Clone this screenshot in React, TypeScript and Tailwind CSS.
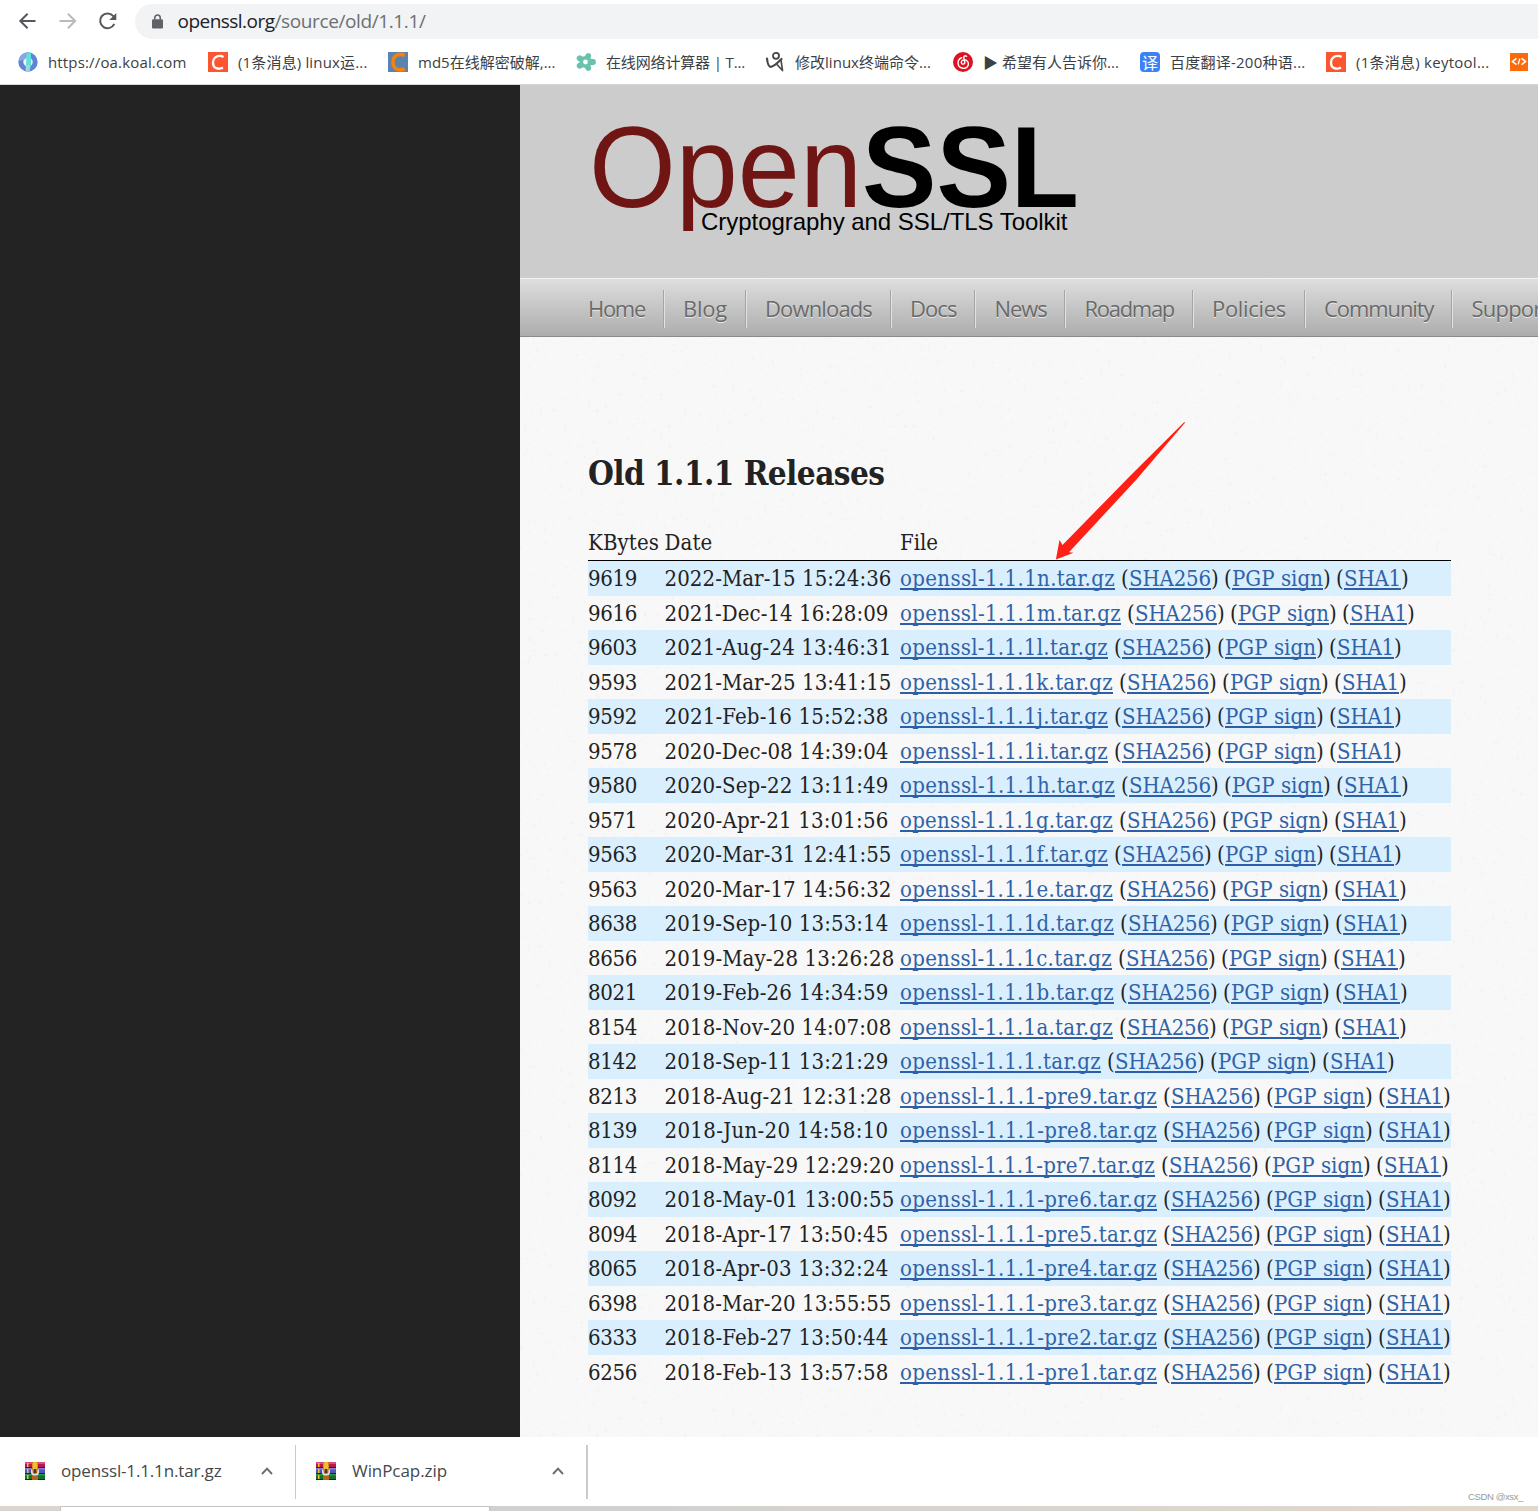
import React from "react";

type Release = [kb: string, date: string, name: string, fileWidth: string];

const releases: Release[] = [
  ["9619", "2022-Mar-15 15:24:36", "1.1.1n", "w-[215px]"],
  ["9616", "2021-Dec-14 16:28:09", "1.1.1m", "w-[221px]"],
  ["9603", "2021-Aug-24 13:46:31", "1.1.1l", "w-[208px]"],
  ["9593", "2021-Mar-25 13:41:15", "1.1.1k", "w-[213px]"],
  ["9592", "2021-Feb-16 15:52:38", "1.1.1j", "w-[208px]"],
  ["9578", "2020-Dec-08 14:39:04", "1.1.1i", "w-[208px]"],
  ["9580", "2020-Sep-22 13:11:49", "1.1.1h", "w-[215px]"],
  ["9571", "2020-Apr-21 13:01:56", "1.1.1g", "w-[213px]"],
  ["9563", "2020-Mar-31 12:41:55", "1.1.1f", "w-[208px]"],
  ["9563", "2020-Mar-17 14:56:32", "1.1.1e", "w-[213px]"],
  ["8638", "2019-Sep-10 13:53:14", "1.1.1d", "w-[214px]"],
  ["8656", "2019-May-28 13:26:28", "1.1.1c", "w-[212px]"],
  ["8021", "2019-Feb-26 14:34:59", "1.1.1b", "w-[214px]"],
  ["8154", "2018-Nov-20 14:07:08", "1.1.1a", "w-[213px]"],
  ["8142", "2018-Sep-11 13:21:29", "1.1.1", "w-[201px]"],
  ["8213", "2018-Aug-21 12:31:28", "1.1.1-pre9", "w-[257px]"],
  ["8139", "2018-Jun-20 14:58:10", "1.1.1-pre8", "w-[257px]"],
  ["8114", "2018-May-29 12:29:20", "1.1.1-pre7", "w-[255px]"],
  ["8092", "2018-May-01 13:00:55", "1.1.1-pre6", "w-[257px]"],
  ["8094", "2018-Apr-17 13:50:45", "1.1.1-pre5", "w-[257px]"],
  ["8065", "2018-Apr-03 13:32:24", "1.1.1-pre4", "w-[257px]"],
  ["6398", "2018-Mar-20 13:55:55", "1.1.1-pre3", "w-[257px]"],
  ["6333", "2018-Feb-27 13:50:44", "1.1.1-pre2", "w-[257px]"],
  ["6256", "2018-Feb-13 13:57:58", "1.1.1-pre1", "w-[257px]"],
];

const navItems: [label: string, width: string][] = [
  ["Home", "w-[95px]"],
  ["Blog", "w-[82px]"],
  ["Downloads", "w-[145px]"],
  ["Docs", "w-[84.5px]"],
  ["News", "w-[90px]"],
  ["Roadmap", "w-[127.5px]"],
  ["Policies", "w-[112px]"],
  ["Community", "w-[147.5px]"],
  ["Support", "w-[115px]"],
];

/** Stretches or squeezes a line of text to fill the width of its box. */
function FitText({ text, className = "" }: { text: string; className?: string }) {
  const ref = React.useRef<HTMLSpanElement>(null);
  const [spacing, setSpacing] = React.useState(0);
  React.useLayoutEffect(() => {
    const el = ref.current;
    if (!el || !el.parentElement) return;
    const room = el.parentElement.getBoundingClientRect().width;
    setSpacing((room - el.getBoundingClientRect().width) / text.length);
  }, [text]);
  return (
    <span ref={ref} className={"inline-block whitespace-nowrap " + className} style={{ letterSpacing: spacing }}>
      {text}
    </span>
  );
}

function CsdnIcon() {
  return (
    <svg viewBox="0 0 20 20" className="size-5">
      <rect width="20" height="20" fill="#fc5531" />
      <path d="M15.600 4.900C11.500 2.400 5 4.400 5 10.900c0 5.400 5.500 6.800 10 4.700" fill="none" stroke="#fff" strokeWidth="2.300" />
    </svg>
  );
}

function KoalIcon() {
  return (
    <svg viewBox="0 0 20 20" className="size-5">
      <circle cx="10" cy="10" r="7.200" fill="#f3f7fd" stroke="#5b86d4" strokeWidth="5" />
      <path d="M.5 9A9.500 9.500 0 0 1 9 .6v5.200L5.500 8z" fill="#86a8e4" />
      <path d="M8.600 1.500 13 0v13.500L11.500 19l-3.800 1z" fill="#62e0dc" />
      <path d="M7.800 13h4l-.5 6-3.500 1z" fill="#a9d5d8" />
    </svg>
  );
}

function Md5Icon() {
  return (
    <svg viewBox="0 0 20 20" className="size-5">
      <rect width="20" height="20" fill="#5b83b0" />
      <path d="M16.700 3.400C10.500.8 5 3.500 5 10.200s5.300 9.200 11.700 6.800" fill="none" stroke="#f5820b" strokeWidth="3.600" />
    </svg>
  );
}

function FlowerIcon() {
  return (
    <svg viewBox="0 0 20 20" className="size-5" fill="#6ac2ae">
      <ellipse cx="15.700" cy="10" rx="4.200" ry="3.200" />
      <ellipse cx="12" cy="4.600" rx="3" ry="3.600" transform="rotate(18 12 4.600)" />
      <ellipse cx="12" cy="15.400" rx="3" ry="3.600" transform="rotate(-18 12 15.400)" />
      <ellipse cx="4.300" cy="6.600" rx="3.700" ry="3.100" transform="rotate(30 4.300 6.600)" />
      <ellipse cx="4.300" cy="13.400" rx="3.700" ry="3.100" transform="rotate(-30 4.300 13.400)" />
      <circle cx="9.700" cy="10" r="6" />
      <circle cx="9.500" cy="10" r="2.400" fill="#fff" />
    </svg>
  );
}

function FigureIcon() {
  return (
    <svg viewBox="0 0 20 20" className="size-5" fill="none" stroke="#46484a" strokeLinecap="round" strokeLinejoin="round">
      <circle cx="11" cy="3.800" r="3" strokeWidth="1.800" />
      <path d="M2 6.500C2.500 11.500 3.500 14.600 5.500 14.800c2.800.3 7-3.800 11-7.800" strokeWidth="2.200" />
      <path d="M16 8 17.500 18.500M12 12.500l5.500 6" strokeWidth="1.700" />
    </svg>
  );
}

function NeteaseIcon() {
  return (
    <svg viewBox="0 0 20 20" className="size-5">
      <circle cx="10" cy="10" r="10" fill="#dc1223" />
      <path
        d="M13.600 4.300c-1.800-1-3.200-.2-2.800 1.400l1 4.400c.4 2.600-3.500 2.700-3.500.2 0-2.200 2.700-3 4.700-2.100 2.600 1.200 3.200 4.400 1.400 6.500-2.500 2.600-7.100 2.100-8.800-1.100-1.700-3.500.1-6.900 3-7.900"
        fill="none"
        stroke="#fff"
        strokeWidth="1.450"
        strokeLinecap="round"
      />
    </svg>
  );
}

function TranslateIcon() {
  return (
    <span className="flex size-5 items-center justify-center rounded-[4px] bg-[#3b82f7] pb-px font-['Noto_Sans_CJK_SC',sans-serif] text-[16px] leading-none text-white">
      译
    </span>
  );
}

function CodeIcon() {
  return (
    <svg viewBox="0 0 20 20" className="size-5">
      <rect width="20" height="20" fill="#fc6a0c" />
      <path d="M7.200 6 2.700 9.500 7.200 13M12.800 6l4.500 3.500-4.500 3.500" fill="none" stroke="#fff" strokeWidth="1.800" />
      <path d="M10.900 6.300 9.100 12.700" stroke="#fff" strokeWidth="1.500" />
    </svg>
  );
}

const bookmarks: { icon: React.ReactNode; text: string; slot: string; label: string }[] = [
  { icon: <KoalIcon />, text: "https://oa.koal.com", slot: "w-[190px]", label: "w-[138.500px]" },
  { icon: <CsdnIcon />, text: "(1条消息) linux运...", slot: "w-[180px]", label: "w-[129.500px]" },
  { icon: <Md5Icon />, text: "md5在线解密破解,...", slot: "w-[188px]", label: "w-[137.500px]" },
  { icon: <FlowerIcon />, text: "在线网络计算器 | T...", slot: "w-[189px]", label: "w-[139px]" },
  { icon: <FigureIcon />, text: "修改linux终端命令...", slot: "w-[188px]", label: "w-[136px]" },
  { icon: <NeteaseIcon />, text: "▶ 希望有人告诉你...", slot: "w-[187px]", label: "w-[136px]" },
  { icon: <TranslateIcon />, text: "百度翻译-200种语...", slot: "w-[186px]", label: "w-[135.500px]" },
  { icon: <CsdnIcon />, text: "(1条消息) keytool...", slot: "w-[184px]", label: "w-[133.500px]" },
  { icon: <CodeIcon />, text: "", slot: "w-[28px]", label: "w-0" },
];

function Toolbar() {
  return (
    <div className="flex h-[43px] shrink-0 items-center">
      <div className="flex w-[135px] shrink-0 items-center pb-px pl-[18px]">
        <svg viewBox="0 0 20 20" className="size-5" fill="none" stroke="#55585c" strokeWidth="2">
          <path d="M17.500 10H2.700M9.600 2.700 2.300 10l7.300 7.300" />
        </svg>
        <svg viewBox="0 0 20 20" className="ml-5 size-5" fill="none" stroke="#b9bbbd" strokeWidth="2">
          <path d="M1.500 10h15.300M9.900 2.700l7.300 7.300-7.300 7.300" />
        </svg>
        <svg viewBox="0 0 20 20" className="ml-5 size-5">
          <path d="M16.300 12.800a7.400 7.400 0 1 1-1.200-7.900l1.600 2" fill="none" stroke="#55585c" strokeWidth="2" />
          <path d="M18.300 2v7h-7z" fill="#55585c" />
        </svg>
      </div>
      <div className="flex h-[35px] flex-1 items-center rounded-l-full bg-[#f1f3f4] pl-[17px]">
        <svg viewBox="0 0 12 16" className="h-[15px] w-[11px]">
          <rect y="5.500" width="12" height="10" rx="1.300" fill="#5f6368" />
          <path d="M3 6V4a3 3 0 0 1 6 0v2" fill="none" stroke="#5f6368" strokeWidth="1.700" />
        </svg>
        <div className="ml-[14.500px] w-[248px] text-[19px] text-[#6c6f73]">
          <span className="inline-block w-[97px] text-[#202124]"><FitText text="openssl.org" /></span>
          <span className="inline-block w-[151px]"><FitText text="/source/old/1.1.1/" /></span>
        </div>
      </div>
    </div>
  );
}

function BookmarksBar() {
  return (
    <div className="flex h-[42px] shrink-0 overflow-hidden border-b border-[#d5d7d8] pl-[18px] text-[15px] text-[#3c4043]">
      {bookmarks.map((b, i) => (
        <div key={i} className={"flex h-[38px] shrink-0 items-center gap-[10px] " + b.slot}>
          {b.icon}
          <div className={"shrink-0 " + b.label}>{b.text && <FitText text={b.text} />}</div>
        </div>
      ))}
    </div>
  );
}

function Logo() {
  return (
    <svg viewBox="0 0 500 150" className="h-[150px] w-[500px] overflow-visible font-['Liberation_Sans',Arial,sans-serif]">
      <text x="0" y="106" fontSize="115" fill="#6f1513" textLength="273" lengthAdjust="spacingAndGlyphs">Open</text>
      <text x="273" y="106" fontSize="115" fontWeight="700" textLength="217" lengthAdjust="spacingAndGlyphs">SSL</text>
      <text x="112" y="129" fontSize="24" textLength="366.500">Cryptography and SSL/TLS Toolkit</text>
    </svg>
  );
}

function Nav() {
  return (
    <nav className="flex h-[59px] shrink-0 items-start overflow-hidden border-t border-b border-t-[#f4f4f4] border-b-[#8a8a8a] bg-linear-to-b from-[#dedede] to-[#adadad] pl-[48.500px] pt-[11px] text-[22px] text-[#6a6a6a] [text-shadow:0_1px_0_#e8e8e8]">
      {navItems.map(([label, width]) => (
        <a
          key={label}
          className={"flex h-[38px] shrink-0 items-center border-r border-[#a5a5a5] pr-[17.500px] pb-[2px] pl-[19.500px] shadow-[1px_0_0_#e2e2e2] " + width}
        >
          <span className="w-full"><FitText text={label} /></span>
        </a>
      ))}
    </nav>
  );
}

function Link({ text, width }: { text: string; width: string }) {
  return (
    <a className={"inline-block shrink-0 text-[#2f62a6] " + width}>
      <FitText text={text} className="underline decoration-[#2c5fa8] decoration-2 underline-offset-2 [text-decoration-skip-ink:none]" />
    </a>
  );
}

function Paren({ children, pad }: { children: React.ReactNode; pad: string }) {
  return (
    <span className={"flex shrink-0 items-center " + pad}>
      <span className="w-[8px]">(</span>
      {children}
      <span className="w-[7px]">)</span>
    </span>
  );
}

function ReleaseTable() {
  return (
    <div className="w-[863px] text-[22px] text-[#222]">
      <div className="flex h-[37px] items-center border-b border-black">
        <span className="w-[76.500px] shrink-0"><span className="inline-block w-[71px]"><FitText text="KBytes" /></span></span>
        <span className="w-[235.500px] shrink-0"><span className="inline-block w-[48px]"><FitText text="Date" /></span></span>
        <span className="inline-block w-[38px]"><FitText text="File" /></span>
      </div>
      {releases.map(([kb, date, name, width]) => (
        <div key={name} className="flex h-[34.500px] items-center pt-px odd:bg-transparent even:bg-[#daeffe]">
          <span className="w-[76.500px] shrink-0"><span className="inline-block w-[49px]"><FitText text={kb} /></span></span>
          <span className="w-[235.500px] shrink-0">
            <span className={date.includes("May") ? "inline-block w-[230px]" : date.includes("Mar") || date.includes("Nov") || date.includes("Aug") ? "inline-block w-[227px]" : "inline-block w-[224px]"}>
              <FitText text={date} />
            </span>
          </span>
          <Link text={`openssl-${name}.tar.gz`} width={width} />
          <Paren pad="ml-[6px]"><Link text="SHA256" width="w-[82px]" /></Paren>
          <Paren pad="ml-[6px]"><Link text="PGP sign" width="w-[91px]" /></Paren>
          <Paren pad="ml-[6px]"><Link text="SHA1" width="w-[57px]" /></Paren>
        </div>
      ))}
    </div>
  );
}

/** Faint paper grain laid over the page surface. */
function PaperGrain() {
  return (
    <svg className="pointer-events-none absolute inset-0 h-full w-full" aria-hidden="true">
      <filter id="grain" x="0" y="0" width="100%" height="100%">
        <feTurbulence type="fractalNoise" baseFrequency="0.25" numOctaves="3" seed="4" />
        <feColorMatrix values="0 0 0 0 0.4  0 0 0 0 0.4  0 0 0 0 0.4  1.2 0 0 0 -0.76" />
      </filter>
      <rect width="100%" height="100%" filter="url(#grain)" opacity="0.3" />
    </svg>
  );
}

function ArchiveIcon() {
  return (
    <svg viewBox="0 0 20 20" className="size-5">
      <rect y="1" width="20" height="6" rx="1" fill="#b7184a" />
      <rect y="1" width="20" height="2" fill="#dc4b82" />
      <rect y="7" width="20" height="6" fill="#5751b8" />
      <rect y="7" width="20" height="1.500" fill="#8581d6" />
      <rect y="13" width="20" height="6" rx="1" fill="#14702f" />
      <rect y="13" width="20" height="1.500" fill="#259a43" />
      <path d="M0 6h20v1H0zM0 12h20v1H0zM0 18h20v1H0z" fill="#35172f" />
      <path d="M2 2h1.500v4H2zM2 8h1.500v4H2zM2 14h1.500v4H2z" fill="#f5c52a" />
      <rect x="7" y="1" width="6" height="18" fill="#b8651c" />
      <rect x="7.500" y="1" width="5" height="7.500" rx="1.500" fill="#f4bd2e" />
      <path d="M6.800 8.500v2.800a3.200 2.500 0 0 0 6.400 0V8.500" fill="none" stroke="#e9e6e2" strokeWidth="1.500" />
      <rect x="9" y="8" width="2" height="4" fill="#493736" />
    </svg>
  );
}

function DownloadItem({ name, width, label, border }: { name: string; width: string; label: string; border: string }) {
  return (
    <div className={"flex h-[54px] shrink-0 items-center border-[#c9cacc] pb-[2px] " + width + " " + border}>
      <ArchiveIcon />
      <span className={"ml-4 inline-block " + label}><FitText text={name} /></span>
      <svg viewBox="0 0 12 8" className="mr-[22px] ml-auto h-2 w-3" fill="none" stroke="#696c70" strokeWidth="1.900">
        <path d="m1 7 5-5.300L11 7" />
      </svg>
    </div>
  );
}

function DownloadsBar() {
  return (
    <footer className="flex h-[69px] shrink-0 items-start bg-white pt-2 pl-[25px] text-[17px] text-[#45484b]">
      <DownloadItem name="openssl-1.1.1n.tar.gz" width="w-[271px]" label="w-[160.500px]" border="border-r" />
      <div className="w-5 shrink-0" />
      <DownloadItem name="WinPcap.zip" width="w-[272px]" label="w-[95px]" border="border-r-2" />
      <span className="mt-[46px] mr-[15px] ml-auto w-[55px] font-['Liberation_Sans',Arial,sans-serif] text-[9.500px] leading-3 text-[#999]">
        <FitText text="CSDN @xsx_" />
      </span>
    </footer>
  );
}

export default function App() {
  return (
    <div className="flex h-[1511px] w-[1538px] flex-col overflow-hidden bg-white font-['Open_Sans','Noto_Sans_CJK_SC',sans-serif]">
      <Toolbar />
      <BookmarksBar />
      <div className="flex min-h-0 flex-1">
        <aside className="w-[520px] shrink-0 bg-[#232323]" />
        <main className="flex min-w-0 flex-1 flex-col bg-[#f8f8f8]">
          <header className="h-[193px] shrink-0 bg-[#ccc] pt-4 pl-[69px]">
            <Logo />
          </header>
          <Nav />
          <section className="relative flex-1 font-['DejaVu_Serif_Condensed','DejaVu_Serif',serif]">
            <PaperGrain />
            <div className="relative pt-[110px] pl-[68px]">
              <h1 className="h-[77px] w-[296.500px] text-[33px] leading-[54px] font-bold text-[#222]">
                <FitText text="Old 1.1.1 Releases" />
              </h1>
              <ReleaseTable />
            </div>
            <svg viewBox="0 0 132 140" className="absolute top-[84px] left-[535px] h-[140px] w-[132px]" fill="#ff2015">
              <path d="M129.300 1 130 1.700 81 59 14 131.300 18.500 131.800.9 138.500 4.500 119 7.500 124 76 54z" />
            </svg>
          </section>
        </main>
      </div>
      <DownloadsBar />
      <div className="flex h-[5px] shrink-0">
        <div className="w-[60px] bg-[#dcd5cf]" />
        <div className="w-[430px] border border-b-0 border-[#c4c4c4] bg-white" />
        <div className="flex-1 bg-linear-to-r from-[#d0d0d0] to-[#e2d8cd]" />
      </div>
    </div>
  );
}
